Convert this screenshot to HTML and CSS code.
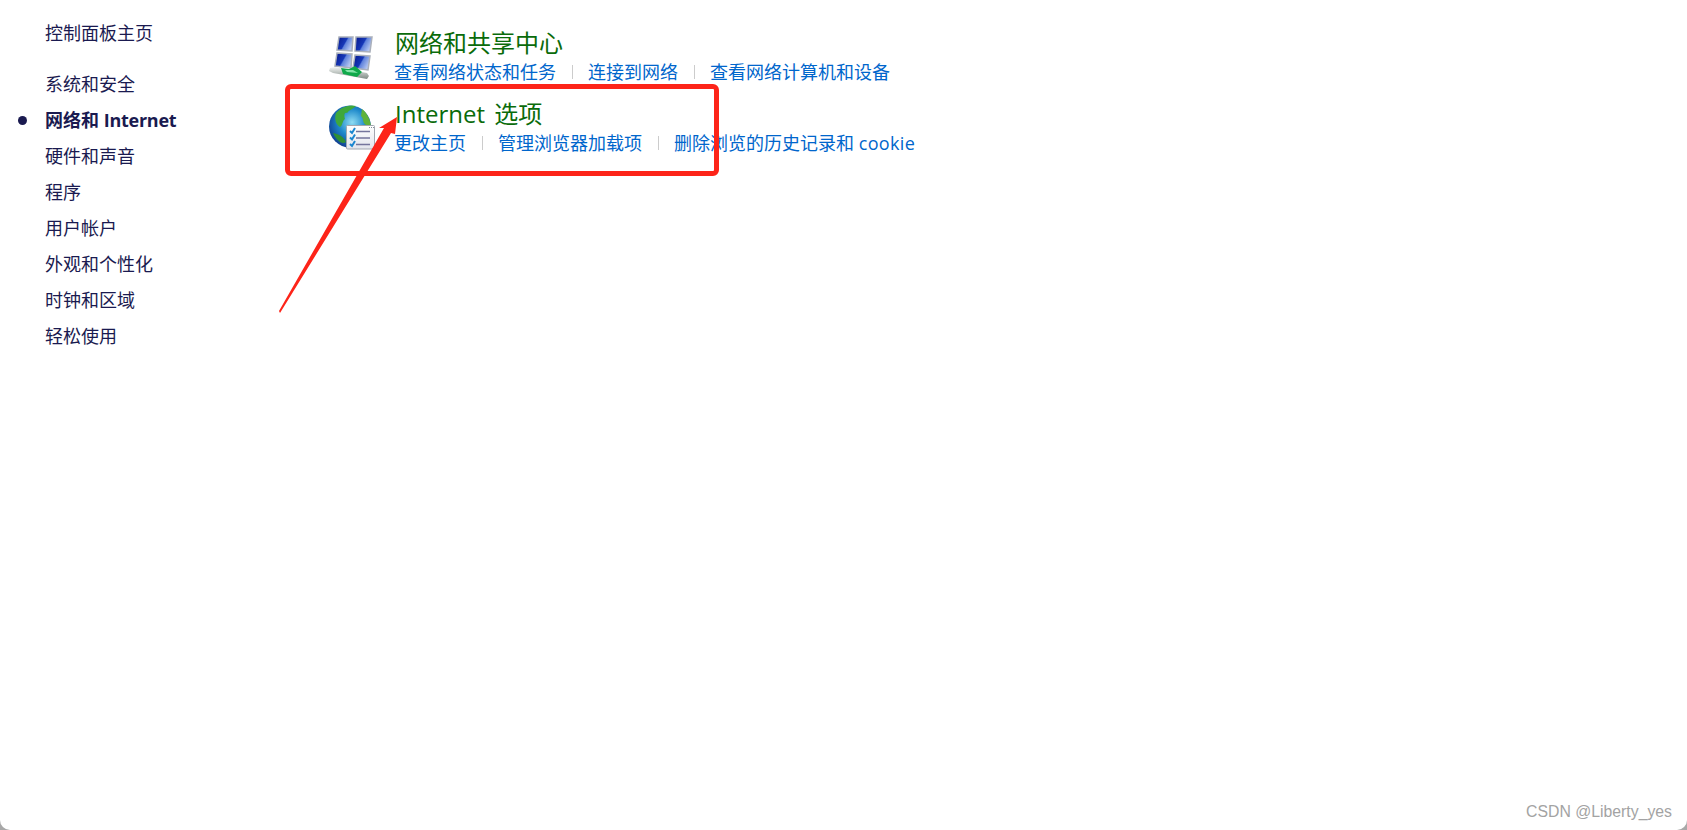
FILE: index.html
```html
<!DOCTYPE html>
<html lang="zh-CN">
<head>
<meta charset="utf-8">
<title>网络和 Internet</title>
<link rel="stylesheet" href="styles.css">
</head>
<body>
<div class="window">
  <ul class="sidebar">
    <li class="home">控制面板主页</li>
    <li>系统和安全</li>
    <li class="current">网络和 <span class="tight">Internet</span></li>
    <li>硬件和声音</li>
    <li>程序</li>
    <li>用户帐户</li>
    <li>外观和个性化</li>
    <li>时钟和区域</li>
    <li>轻松使用</li>
  </ul>
  <div class="main">
    <div class="item">
      <svg class="icon" width="50" height="54" viewBox="0 0 50 54">
        <defs>
          <linearGradient id="screen" x1="0" y1="0" x2="1" y2="0.5">
            <stop offset="0" stop-color="#06168a"/>
            <stop offset="0.55" stop-color="#1638b8"/>
            <stop offset="0.62" stop-color="#5f82dc"/>
            <stop offset="1" stop-color="#b4c6f0"/>
          </linearGradient>
          <linearGradient id="cable" x1="0" y1="0" x2="0" y2="1">
            <stop offset="0" stop-color="#f4f6f4"/>
            <stop offset="1" stop-color="#7f8b85"/>
          </linearGradient>
        </defs>
        <g stroke="#aab0bb" stroke-width="1.500">
          <polygon points="10,10 24,10 23,24 8,23" fill="url(#screen)"/>
          <polygon points="27,10 43,10 41,25 26,24" fill="url(#screen)"/>
          <polygon points="8,26 23,27 22,41 6,39" fill="url(#screen)"/>
          <polygon points="26,28 41,29 39,43 24,41" fill="url(#screen)"/>
        </g>
        <polygon points="1,41 6,40 38,46 40,49 38,52 4,46 0,44" fill="url(#cable)"/>
        <polygon points="12,41 20,42 26,39 33,45 28,50 14,47" fill="#10a94a"/>
        <polygon points="16,43 24,43 29,46 18,45" fill="#82e4a6"/>
      </svg>
      <div class="text">
        <div class="title">网络和共享中心</div>
        <div class="links">
          <a>查看网络状态和任务</a><span class="sep"></span><a>连接到网络</a><span class="sep"></span><a>查看网络计算机和设备</a>
        </div>
      </div>
    </div>
    <div class="item">
      <svg class="icon" width="50" height="58" viewBox="0 0 50 58">
        <defs>
          <radialGradient id="ocean" cx="0.55" cy="0.4" r="0.7">
            <stop offset="0" stop-color="#8edcf2"/>
            <stop offset="0.45" stop-color="#1f8acb"/>
            <stop offset="1" stop-color="#0c2a80"/>
          </radialGradient>
          <linearGradient id="paper" x1="0" y1="0" x2="0" y2="1">
            <stop offset="0" stop-color="#ffffff"/>
            <stop offset="1" stop-color="#e2e5ec"/>
          </linearGradient>
        </defs>
        <circle cx="21" cy="28.500" r="21" fill="url(#ocean)"/>
        <path d="M7 15 C12 9 21 6 27 8 C24 11 20 12 18 15 C15 14 15 18 16 21 C13 23 14 27 11 29 C7 27 5 21 7 15Z" fill="#3fa83a"/>
        <path d="M33 11 C38 15 41 21 42 28 C40 32 37 30 37 27 C33 25 35 20 32 18Z" fill="#5fb23a"/>
        <path d="M4 35 C10 36 15 39 17 44 C13 47 8 43 4 35Z" fill="#2f8f34"/>
        <rect x="17.500" y="27.500" width="28" height="23.500" rx="1" fill="url(#paper)" stroke="#a2a7b0"/>
        <path d="M40 29.500h1M42 29.500h1M44 29.500h1" stroke="#8a919e"/>
        <path d="M27 33.500H41M27 40H41M27 46.500H41" stroke="#74759c" stroke-width="1.300"/>
        <path d="M21 33l2 2 3-5M21 39.500l2 2 3-5M21 46l2 2 3-5" stroke="#1a86cf" stroke-width="2" fill="none"/>
      </svg>
      <div class="text">
        <div class="title">Internet 选项</div>
        <div class="links">
          <a>更改主页</a><span class="sep"></span><a>管理浏览器加载项</a><span class="sep"></span><a>删除浏览的历史记录和 <span class="latin">cookie</span></a>
        </div>
      </div>
    </div>
  </div>
  <div class="highlight"></div>
  <svg class="arrow" width="130" height="210" viewBox="0 0 130 210">
    <polygon points="0,200 1,202 112,22 116,23 118,6 100,17 105,17" fill="#fd2419"/>
  </svg>
  <div class="watermark">CSDN @Liberty_yes</div>
  <div class="corners"></div>
</div>
</body>
</html>
```

FILE: styles.css
```css
html, body {
  margin: 0;
  padding: 0;
  height: 100%;
  background: #fff;
}

.window {
  position: relative;
  display: flex;
  height: 830px;
  overflow: hidden;
  font-family: "Open Sans", "Noto Sans CJK SC", sans-serif;
}

.sidebar {
  width: 302px;
  box-sizing: border-box;
  margin: 0;
  padding: 15px 0 0 45px;
  list-style: none;
  font-size: 18px;
  line-height: 36px;
  color: #1a1a50;
}

.sidebar .home {
  margin-bottom: 15px;
}

.sidebar .current {
  font-weight: 700;
}

.sidebar .current::before {
  content: "";
  display: inline-block;
  width: 9px;
  height: 9px;
  margin-left: -27px;
  margin-right: 18px;
  border-radius: 50%;
  background: #1a1a50;
  vertical-align: 2px;
}

.tight {
  letter-spacing: -0.250px;
}

.main {
  padding: 27px 0 0 27px;
  display: flex;
  flex-direction: column;
  gap: 13px;
}

.item {
  display: flex;
  height: 58px;
}

.icon {
  flex: none;
  margin-right: 15px;
}

.title {
  height: 32px;
  padding-left: 1px;
  font-size: 24px;
  line-height: 32px;
  word-spacing: 3px;
  color: #0a6b0a;
}

.links {
  display: flex;
  align-items: center;
  height: 26px;
  font-size: 18px;
  line-height: 26px;
  color: #0066cc;
  white-space: nowrap;
}

.latin {
  letter-spacing: 0.350px;
}

.sep {
  width: 1px;
  height: 14px;
  margin: 0 15.500px;
  background: #ccc;
}

.highlight {
  position: absolute;
  left: 285px;
  top: 84px;
  width: 434px;
  height: 92px;
  box-sizing: border-box;
  border: 5px solid #fd2419;
  border-radius: 6px;
}

.arrow {
  position: absolute;
  left: 279px;
  top: 111px;
}

.watermark {
  position: absolute;
  right: 15px;
  bottom: 9px;
  font-family: "Liberation Sans", sans-serif;
  font-size: 15.800px;
  color: #a3a3a3;
}

.corners {
  position: absolute;
  left: 0;
  top: -30px;
  width: 100%;
  height: 860px;
  border-radius: 10px;
  box-shadow: 0 0 0 14px #a8a8a8;
}
```
